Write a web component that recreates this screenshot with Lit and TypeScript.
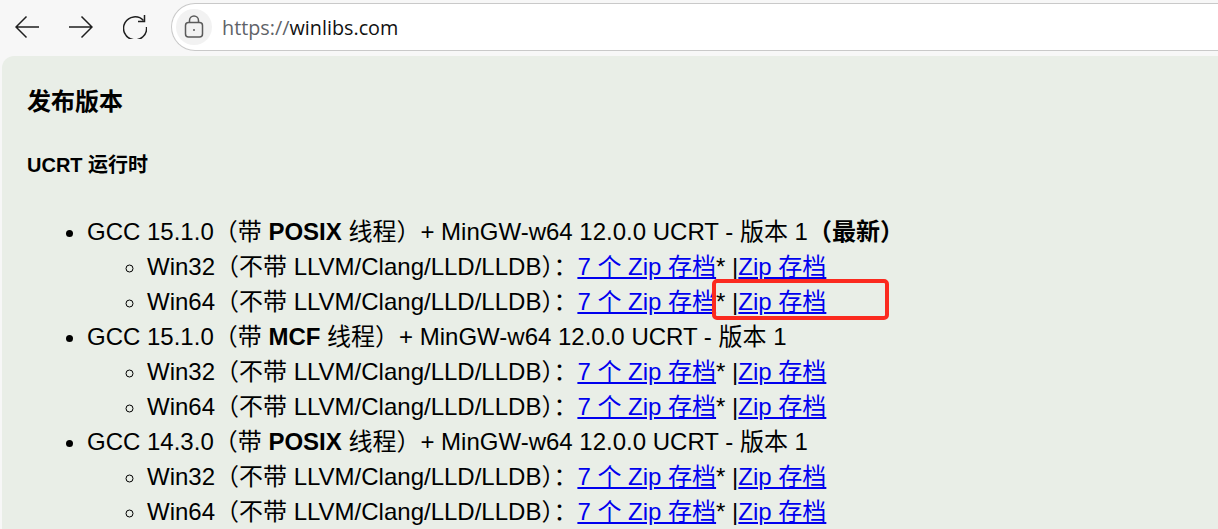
import { LitElement, html, css } from "lit";
import { customElement } from "lit/decorators.js";

interface Build { version: string; thread: string; rest: string; latest?: boolean }

const builds: Build[] = [
  { version: "GCC 15.1.0", thread: "POSIX", rest: "+ MinGW-w64 12.0.0 UCRT - 版本 1", latest: true },
  { version: "GCC 15.1.0", thread: "MCF", rest: "+ MinGW-w64 12.0.0 UCRT - 版本 1" },
  { version: "GCC 14.3.0", thread: "POSIX", rest: "+ MinGW-w64 12.0.0 UCRT - 版本 1" },
];

@customElement("app-root")
export class AppRoot extends LitElement {
  static styles = css`
    :host {
      display: block;
      width: 1218px;
      height: 529px;
      overflow: hidden;
      background: #f7f7f7;
      font-family: "Liberation Sans", "Noto Sans CJK SC", sans-serif;
      color: #000;
    }
    .toolbar {
      height: 56px;
      display: flex;
      align-items: flex-start;
      box-sizing: border-box;
    }
    .nav {
      width: 24px;
      height: 24px;
      margin-top: 15px;
      flex: none;
    }
    .back { margin-left: 15px; }
    .forward { margin-left: 30px; }
    .reload { margin-left: 30px; }
    .omnibox {
      margin: 3px 0 0 24px;
      flex: 1;
      height: 48px;
      box-sizing: border-box;
      background: #fff;
      border: 1.5px solid #c9c9c9;
      border-right: none;
      border-radius: 24px 0 0 24px;
      display: flex;
      align-items: center;
      padding-left: 4px;
    }
    .lock {
      width: 36px;
      height: 36px;
      border-radius: 50%;
      background: #f2f2f2;
      display: flex;
      align-items: center;
      justify-content: center;
    }
    .url {
      margin-left: 10px;
      font-family: "Open Sans", "Noto Sans", sans-serif;
      font-size: 19.8px;
      color: #111;
    }
    .url span { color: #5f6368; }
    .page {
      position: relative;
      margin-left: 2px;
      height: 473px;
      overflow: hidden;
      box-sizing: border-box;
      background: #e9eee7;
      border-top-left-radius: 12px;
      padding: 29px 0 0 25px;
    }
    h2 {
      margin: 0;
      font-size: 24px;
      line-height: 34px;
      font-weight: 700;
    }
    h3 {
      margin: 32px 0 0;
      font-size: 20px;
      line-height: 28px;
      font-weight: 700;
    }
    ul {
      margin: 0;
      padding: 0 0 0 60px;
      font-size: 24px;
      line-height: 35px;
    }
    .top { margin-top: 35px; }
    .top > li { list-style: disc; }
    ul ul li { list-style: circle; }
    a { color: #0000ee; text-decoration: underline; }
    .highlight {
      position: absolute;
      left: 710px;
      top: 223px;
      width: 177px;
      height: 41px;
      box-sizing: border-box;
      border: 4px solid #fb2a1f;
      border-radius: 5px;
    }
  `;

  private arch(name: string) {
    return html`<li>${name}（不带 LLVM/Clang/LLD/LLDB）：<a href="#">7 个 Zip 存档</a>* |<a href="#">Zip 存档</a></li>`;
  }

  render() {
    return html`
      <div class="toolbar">
        <svg class="nav back" viewBox="0 0 24 24" fill="none" stroke="#1f1f1f" stroke-width="1.5">
          <path d="M24 12H1M11.5 1.5 1 12l10.500 10.500" />
        </svg>
        <svg class="nav forward" viewBox="0 0 24 24" fill="none" stroke="#1f1f1f" stroke-width="1.5">
          <path d="M0 12h23M12.500 1.500 23 12 12.500 22.500" />
        </svg>
        <svg class="nav reload" viewBox="0 0 24 24" fill="none" stroke="#1f1f1f" stroke-width="1.500">
          <path d="M20.500 5.500A11.500 11.500 0 1 0 23.500 12" />
          <path d="M21.500 0v6.500H15" />
        </svg>
        <div class="omnibox">
          <div class="lock">
            <svg width="20" height="24" viewBox="0 0 20 24" fill="none" stroke="#5a5a5a" stroke-width="1.500">
              <rect x="1.500" y="7.500" width="17" height="14.500" rx="3" />
              <path d="M5.500 7.500V5.500a4.500 4.500 0 0 1 9 0v2" />
              <circle cx="10" cy="15" r="1" fill="#5a5a5a" stroke="none" />
            </svg>
          </div>
          <div class="url"><span>https://</span>winlibs.com</div>
        </div>
      </div>
      <div class="page">
        <h2>发布版本</h2>
        <h3>UCRT 运行时</h3>
        <ul class="top">
          ${builds.map(
            (b) => html`<li>
              ${b.version}（带 <b>${b.thread}</b> 线程）${b.rest}${b.latest ? html`<b>（最新）</b>` : ""}
              <ul>${this.arch("Win32")}${this.arch("Win64")}</ul>
            </li>`
          )}
        </ul>
        <div class="highlight"></div>
      </div>
    `;
  }
}
